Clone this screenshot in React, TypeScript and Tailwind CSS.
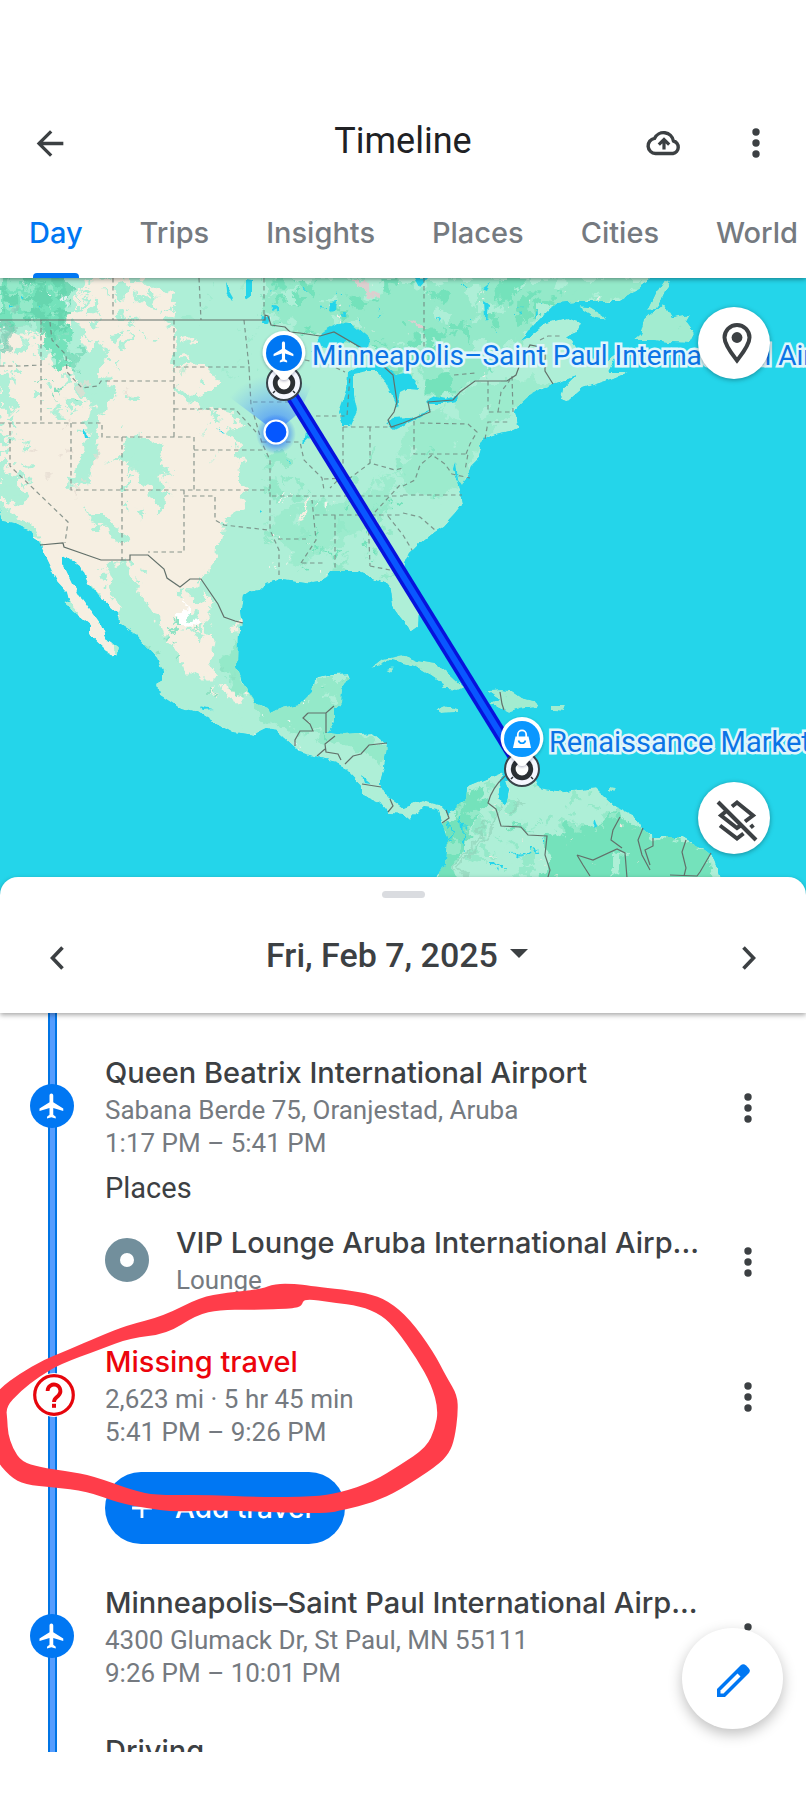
import React from "react";
import { MdArrowBack, MdAdd, MdFlight } from "react-icons/md";

type Pt = [number, number];

/* ---------- drawing helpers ---------- */

function smooth(points: Pt[]): string {
  const mid = (a: Pt, b: Pt): Pt => [(a[0] + b[0]) / 2, (a[1] + b[1]) / 2];
  const n = points.length;
  const start = mid(points[n - 1], points[0]);
  let d = `M${start[0]} ${start[1]}`;
  for (let i = 0; i < n; i++) {
    const m = mid(points[i], points[(i + 1) % n]);
    d += `Q${points[i][0]} ${points[i][1]} ${m[0]} ${m[1]}`;
  }
  return d + "Z";
}

function random(seed: number) {
  let s = seed;
  return () => {
    s = (s * 1664525 + 1013904223) % 4294967296;
    return s / 4294967296;
  };
}

type Box = [number, number, number, number];

function patches(seed: number, count: number, [x0, y0, x1, y1]: Box, min: number, max: number): string {
  const r = random(seed);
  let d = "";
  for (let i = 0; i < count; i++) {
    const cx = x0 + r() * (x1 - x0);
    const cy = y0 + r() * (y1 - y0);
    const size = min + r() * r() * (max - min);
    const squash = 0.4 + r() * 0.6;
    const tilt = r() * Math.PI;
    for (let k = 0; k < 9; k++) {
      const a = (k / 9) * Math.PI * 2;
      const q = size * (0.45 + r() * 0.75);
      const px = Math.cos(a) * q;
      const py = Math.sin(a) * q * squash;
      const x = cx + px * Math.cos(tilt) - py * Math.sin(tilt);
      const y = cy + px * Math.sin(tilt) + py * Math.cos(tilt);
      d += `${k ? "L" : "M"}${x.toFixed(1)} ${y.toFixed(1)}`;
    }
    d += "Z";
  }
  return d;
}

/* ---------- map data ---------- */

const MAINLAND =
  "M0 270H650L648 283L636 291L620 301L603 301L576 301L556 303L550 309L536 323L528 331L521 341L530 336L546 323L566 318L580 324L578 331L566 336L573 341L583 356L595 359L606 362L618 354L608 372L628 372L611 379L583 388L568 401L561 398L563 389L576 376L563 381L553 384L540 389L531 394L518 406L515 413L518 423L521 426L510 431L496 434L483 439L480 444L481 449L478 459L471 466L468 474L462 486L458 480L456 462L454 470L460 489L463 503L455 513L443 526L435 531L420 543L410 553L405 564L404 580L413 600L419 613L418 627L411 632L405 623L400 617L393 607L391 590L385 583L373 578L357 571L330 571L328 577L320 582L313 583L290 580L280 579L267 583L260 590L250 592L243 597L241 610L243 625L238 633L237 668L243 683L255 702L268 707L270 713L280 708L300 704L312 692L314 678L330 674L348 673L350 678L342 690L341 702L334 708L334 723L328 733L343 735L373 733L387 745L384 767L380 783L388 797L403 808L423 801L440 805L448 813L456 807L465 800L466 787L483 780L503 772L500 785L498 798L506 804L509 790L506 781L520 776L536 780L540 788L563 792L596 788L616 807L636 817L643 828L653 837L683 837L700 847L713 857L720 877L725 900H432L434 876L446 864L448 840L443 826L441 818L438 809L423 807L410 820L403 814L388 813L380 803L362 795L362 785L343 765L337 762L317 757L300 752L287 740L277 730L267 728L253 735L233 732L217 723L200 713L178 707L160 695L158 685L162 680L162 672L157 658L143 643L133 632L119 623L117 613L100 598L87 582L80 566L63 554L63 565L72 584L87 605L100 623L107 640L118 648L117 655L113 657L103 647L90 635L90 625L78 615L63 603L70 600L68 592L57 580L53 573L40 546L30 531L13 523L3 521L0 511Z";
const ISLANDS =
  "M372 668L383 659L403 655L418 661L437 664L450 674L464 687L458 690L444 689L440 682L425 672L415 666L403 663L390 660L376 667ZM436 709L445 705L457 709L457 712L442 713ZM487 691L500 690L512 691L522 698L534 701L537 706L520 708L508 712L500 708L490 704L500 700L494 696ZM551 706L566 706L564 711L551 710ZM578 306L590 307L603 315L606 319L595 317ZM648 310L656 293L665 279L670 281L663 298L655 309ZM644 320L655 310L664 304L672 318L690 315L686 322L694 333L689 343L668 342L653 340L633 340L640 334ZM386 670L393 668L390 672ZM609 788L615 789L613 793L609 791Z";
const DESERT =
  "M68 320L75 300L88 282L112 280L140 282L150 290L168 296L175 312L165 320L172 330L174 362L172 372L190 364L206 368L218 385L205 392L196 404L214 410L232 414L243 424L224 432L238 445L240 462L234 482L245 491L234 513L220 530L215 558L206 580L196 588L212 602L204 620L214 640L211 662L210 678L204 678L197 671L188 671L182 652L165 636L159 618L150 604L141 592L132 575L116 569L104 566L102 578L112 592L118 616L100 598L84 572L62 556L72 582L92 610L108 640L118 653L110 654L92 638L80 614L56 580L44 546L36 530L22 516L6 508L0 498V330L20 338Z";
const DESERT_SOUTH = "M213 686L219 690L220 697L215 696ZM224 688L232 685L241 695L242 703L228 696ZM233 622L243 625L237 633Z";
const GREEN_OVER_DESERT =
  "M76 322L84 330L82 350L96 340L108 350L98 372L112 378L108 400L104 420L92 430L100 450L90 470L86 484L68 486L76 466L84 446L90 400L76 392L70 340ZM124 440L146 436L160 444L166 470L160 486L170 492L162 508L152 500L144 482L128 468L118 458L110 466ZM86 510L100 514L116 528L128 530L130 542L112 538L98 528ZM0 460L10 470L22 490L26 506L10 500L0 490ZM0 372L12 380L8 392L22 400L12 410L0 404ZM104 566L116 562L130 570L138 590L120 580ZM192 586L204 588L206 606L194 598ZM176 384L196 396L206 394L200 402L186 400Z";
const CANADA =
  "M264 278H648L636 291L620 301L603 301L556 303L536 323L521 341L500 365L475 381L455 394L430 401L415 385L395 375L370 350L334 332L320 336L300 333L290 327L270 325L264 315Z";
const EAST =
  "M420 412L455 398L478 381L507 381L530 380L552 384L518 406L480 444L462 486L440 500L405 490L375 520L340 545L300 565L270 530L268 515L300 505L350 500L390 470Z";
const TROPICS =
  "M238 640L243 683L255 702L280 708L312 692L314 678L350 678L334 723L387 745L384 767L370 750L340 745L300 735L270 722L250 705L232 688L222 660Z";
const AMAZON =
  "M536 900L548 860L546 835L570 826L600 822L616 807L653 837L700 847L725 900ZM443 830L460 800L480 783L486 800L470 830L455 870L432 900ZM500 822L545 836L520 832Z";
const LAKES =
  "M310 352L324 330L336 323L352 324L370 339L368 348L360 348L347 340L334 348L320 346ZM347 372L362 366L375 369L354 374L354 395L357 410L350 427L343 427L339 412L346 392ZM364 371L374 362L386 366L396 375L408 372L420 389L408 388L400 392L397 407L392 395L384 380L376 371ZM386 424L394 418L410 417L432 409L418 418L394 430ZM427 402L432 396L446 399L457 395L456 402L446 404L430 404ZM330 302L337 301L336 311L329 312ZM225 282L234 298L232 301L226 292ZM246 279L252 280L252 295L246 299ZM263 315L270 318L268 324L262 322ZM482 289L490 283L487 291ZM415 278L428 278L420 287ZM484 302L489 305L487 322L485 318ZM82 428L89 437L84 437ZM305 432L309 438L303 443ZM217 427L225 434L222 433ZM286 460L291 464L290 465ZM361 777L370 784L363 783ZM595 818L598 826L594 828ZM199 706L213 709L204 710ZM261 510L262 513L259 512Z";
const BORDERS =
  "M0 320H265V315L268 316L271 325L285 327L290 332L300 333L320 336L334 332L365 350L393 375L397 402L394 412L388 420L391 427L403 423L430 412L428 402L453 400L460 392L475 381H507L516 375L520 364L530 345L545 348V371L553 384M40 545L63 543L64 547L101 560H130V555H148L164 569L167 578L180 587L190 579H201L218 604L224 617L235 621L243 623M308 713L303 718L310 724L313 731H300L295 740V746M308 713H326L334 706M326 713V733M335 736L325 744L326 752L338 754L341 760M325 749L317 756M345 764L353 756L361 754L369 745L387 743M362 784L381 787M390 799L393 806L388 812M446 810L449 818L442 823M505 776C495 785 490 795 488 803L496 809L501 826L521 827L528 835L547 836L545 855L550 870L546 884M500 692L502 704L504 710M577 855L593 860L617 849L625 853L627 878M577 855L583 865L590 876M620 817L613 830L611 840L622 848M643 828L638 840L642 855L650 870M653 838V846L645 850L650 865M686 840L682 852L686 868L684 876M711 853L700 872L697 876L670 875";
const STATES =
  "M41 320V423M0 366L20 366L42 365M50 322L52 340L66 355L67 372L82 388L98 386L101 381H174M0 423H102V437H194V490M174 320V437M71 423V490H270M122 437V560M194 450H263M184 490V552H148M184 496H215V520L224 525L268 530M176 367H250M174 409H235L256 432M10 423V466L68 522L65 543M244 320L249 367L251 405L262 443L270 460V530L279 550V578M253 402H300M262 442H300L304 460L322 478L324 490M272 496H403M315 515H403M343 427V475L330 488M370 427V463L395 470L403 468M343 427H395M316 416H347L350 375M335 515V570M368 515L370 566M370 566L390 570M301 563L316 540L312 500M278 539H306M302 563H325M324 479L350 478L370 463M375 512L400 485M388 516L403 535L412 550M113 278V320M199 278L201 320M264 278V315M424 278V350L440 365M454 375L475 373M414 421V454H468L465 470M420 423L468 424L477 432L470 444L466 454M488 381V412H513M485 439L488 422H510M498 412L501 392L510 380M512 376L513 412M403 495H462M403 513L420 517L435 530M403 486L415 480L420 465L432 455L445 464L452 474L470 478M540 340L548 336L560 336M305 360L330 365L345 372";

function Plane({ cx, cy, size }: { cx: number; cy: number; size: number }) {
  return (
    <path
      transform={`translate(${cx - size / 2} ${cy - size / 2}) scale(${size / 24})`}
      fill="#fff"
      d="M21 16v-2l-8-5V3.500c0-.83-.67-1.500-1.500-1.500S10 2.670 10 3.500V9l-8 5v2l8-2.500V19l-2 1.500V22l3.500-1 3.500 1v-1.500L13 19v-5.500l8 2.500z"
    />
  );
}

function StopRing({ x, y }: { x: number; y: number }) {
  return (
    <g>
      <circle cx={x} cy={y} r="17" fill="#f5f7ff" stroke="#39444b" strokeWidth="2" />
      <circle cx={x} cy={y} r="8.800" fill="#fff" stroke="#2b2f33" strokeWidth="4.800" />
      <path d={`M${x - 9} ${y + 8}l-2 2M${x + 9} ${y + 8}l2 2`} stroke="#2b2f33" strokeWidth="1.500" />
    </g>
  );
}

function PinBody({ x, y, fill, children }: { x: number; y: number; fill: string; children: React.ReactNode }) {
  return (
    <g>
      <path
        d={`M${x} ${y + 27}c-4 0-6-5-11-9.500A21.300 21.300 0 1 1 ${x + 11} ${y + 17.5}c-5 4.500-7 9.500-11 9.500z`}
        fill="#fff"
        filter="url(#pin-shadow)"
      />
      <circle cx={x} cy={y} r="18" fill={fill} />
      {children}
    </g>
  );
}

function MapDrawing() {
  return (
    <svg
      className="block h-full w-full"
      viewBox="0 278 806 618"
      preserveAspectRatio="xMinYMin slice"
      role="img"
      aria-label="Map of the day's route"
    >
      <defs>
        <clipPath id="land">
          <path d={MAINLAND} />
          <path d={ISLANDS} />
        </clipPath>
        <clipPath id="desert">
          <path d={DESERT} />
        </clipPath>
        <clipPath id="canada">
          <path d={CANADA} />
        </clipPath>
        <clipPath id="east">
          <path d={EAST} />
        </clipPath>
        <radialGradient id="beam" gradientUnits="userSpaceOnUse" cx="276" cy="432" r="58">
          <stop offset="0" stopColor="#2f7cff" stopOpacity="0.850" />
          <stop offset="1" stopColor="#5aa0ff" stopOpacity="0" />
        </radialGradient>
        <radialGradient id="halo" gradientUnits="userSpaceOnUse" cx="276" cy="434" r="20">
          <stop offset="0.500" stopColor="#1b62ff" stopOpacity="0.600" />
          <stop offset="1" stopColor="#1b62ff" stopOpacity="0" />
        </radialGradient>
        <filter id="pin-shadow" x="-30%" y="-30%" width="160%" height="170%">
          <feDropShadow dx="0" dy="1" stdDeviation="1.500" floodColor="#003" floodOpacity="0.350" />
        </filter>
        <filter
          id="terrain"
          filterUnits="userSpaceOnUse"
          x="-20"
          y="250"
          width="850"
          height="670"
          colorInterpolationFilters="sRGB"
        >
          <feTurbulence type="fractalNoise" baseFrequency="0.070" numOctaves="3" seed="4" result="noise" />
          <feDisplacementMap in="SourceGraphic" in2="noise" scale="22" xChannelSelector="R" yChannelSelector="G" />
        </filter>
        <filter
          id="shore"
          filterUnits="userSpaceOnUse"
          x="-20"
          y="250"
          width="850"
          height="670"
          colorInterpolationFilters="sRGB"
        >
          <feTurbulence type="fractalNoise" baseFrequency="0.100" numOctaves="2" seed="9" result="noise" />
          <feDisplacementMap in="SourceGraphic" in2="noise" scale="6" xChannelSelector="R" yChannelSelector="G" />
        </filter>
      </defs>

      <rect x="0" y="278" width="806" height="620" fill="#24d5ea" />
      <g filter="url(#shore)">
        <path d="M-12 270H2V511L-12 505Z" fill="#aeefd7" />
        <g clipPath="url(#land)">
          <path d={MAINLAND} fill="#aeefd7" />
          <path d={ISLANDS} fill="#a2ecd0" />
          <g filter="url(#terrain)">
            <path d={CANADA} fill="#94e9c9" />
            <path d={TROPICS} fill="#94e9c9" />
            <path d={AMAZON} fill="#74e2bb" />
            <path d="M612 855L625 850L622 875L608 870Z" fill="#aeefd7" />
            <path d={DESERT} fill="#f6efe2" stroke="#f6efe2" strokeWidth="3" />
            <path d={DESERT_SOUTH} fill="#f6efe2" />
            <path d="M0 260H60L66 320L80 345L74 362L58 372L46 350L44 322L20 326L0 345Z" fill="#74e2bb" />
            <path d={GREEN_OVER_DESERT} fill="#aeefd7" />
            <g clipPath="url(#canada)">
              <path d={patches(11, 70, [264, 278, 560, 400], 4, 18)} fill="#74e2bb" />
              <path d={patches(12, 75, [264, 278, 650, 400], 4, 16)} fill="#aeefd7" />
              <path d={patches(13, 30, [264, 278, 620, 340], 1, 4)} fill="#24d5ea" />
              <path d={patches(14, 60, [264, 278, 650, 390], 1, 2)} fill="#f1f2ea" />
              <path d="M415 318L424 322L427 328L418 325ZM352 279L366 280L372 292L382 290L380 297L368 295L358 286Z" fill="#dccfcf" />
            </g>
            <g clipPath="url(#east)">
              <path d={EAST} fill="#94e9c9" opacity="0.700" />
              <path d={patches(21, 60, [265, 390, 540, 575], 4, 18)} fill="#aeefd7" />
              <path d={patches(22, 18, [300, 440, 470, 575], 2, 7)} fill="#84e5c2" />
            </g>
            <path d={patches(23, 34, [265, 450, 400, 580], 4, 16)} fill="#94e9c9" />
            <path d={patches(24, 16, [290, 500, 400, 570], 2, 6)} fill="#74e2bb" />
            <path d={patches(25, 22, [265, 495, 345, 575], 1, 3)} fill="#f3f6ec" />
            <path d="M303 500L307 496L306 512L302 522L300 515L304 510Z" fill="#f6efe2" />
            <g clipPath="url(#desert)">
              <path d={patches(31, 50, [60, 278, 178, 345], 2, 10)} fill="#aeefd7" />
              <path d={patches(32, 50, [0, 330, 90, 440], 2, 10)} fill="#aeefd7" />
              <path d={patches(33, 26, [80, 350, 135, 480], 2, 8)} fill="#aeefd7" />
              <path d={patches(34, 22, [120, 440, 175, 520], 2, 9)} fill="#aeefd7" />
              <path d={patches(35, 22, [0, 440, 30, 540], 2, 8)} fill="#aeefd7" />
              <path d={patches(36, 20, [190, 380, 246, 460], 2, 9)} fill="#aeefd7" />
              <path d={patches(37, 20, [100, 560, 150, 620], 2, 8)} fill="#aeefd7" />
              <path d={patches(38, 16, [180, 580, 214, 640], 2, 7)} fill="#aeefd7" />
              <path d={patches(39, 14, [20, 380, 130, 500], 2, 8)} fill="#e6dcd2" opacity="0.700" />
            </g>
            <path d={patches(41, 60, [0, 278, 66, 330], 2, 13)} fill="#63d3ad" opacity="0.800" />
            <path d={patches(42, 34, [8, 278, 70, 330], 2, 9)} fill="#94e9c9" />
            <path d={patches(47, 20, [44, 330, 80, 400], 2, 9)} fill="#86dfc0" />
            <path d={patches(43, 8, [20, 280, 66, 305], 1, 5)} fill="#e6f3f0" />
            <path d={patches(44, 5, [10, 285, 60, 330], 1, 4)} fill="#24d5ea" />
            <path d={patches(45, 12, [0, 310, 20, 345], 3, 10)} fill="#8fcdb9" opacity="0.700" />
            <path d={patches(46, 20, [178, 282, 260, 380], 1, 6)} fill="#94e9c9" opacity="0.500" />
            <path d="M182 336L188 334L184 342ZM186 338L195 336L194 341L188 342ZM180 356L188 354L186 361ZM132 280L142 284L150 300L140 296Z" fill="#f6efe2" />
            <path d="M183 597L185 606L189 614L196 616L200 625L192 628L188 632L185 624L177 620L182 612Z" fill="#fff" />
            <path d="M186 612L196 608L200 618L192 620ZM177 632L188 632L198 630L206 638L195 634Z" fill="#aeefd7" />
            <path d={patches(51, 22, [130, 610, 240, 735], 2, 6)} fill="#8fe3c4" />
            <path d={patches(52, 24, [240, 690, 340, 750], 2, 7)} fill="#aeefd7" />
            <path d={patches(53, 14, [260, 680, 400, 800], 2, 6)} fill="#74e2bb" />
            <path d={patches(54, 26, [240, 680, 400, 815], 1, 2)} fill="#f4fbf6" />
            <path d={patches(61, 30, [450, 780, 545, 880], 3, 14)} fill="#94e9c9" />
            <path d={patches(62, 22, [540, 785, 625, 830], 3, 12)} fill="#94e9c9" />
            <path d={patches(63, 18, [480, 800, 545, 880], 3, 10)} fill="#aeefd7" />
            <path d={patches(64, 22, [465, 785, 640, 880], 1, 2)} fill="#f2eadf" />
            <path d="M500 806L492 830L474 852L460 876M486 822L470 850L456 870M522 800L510 812" stroke="#8fd0b8" strokeWidth="3" fill="none" opacity="0.600" />
            <path d={patches(65, 22, [380, 655, 540, 715], 1, 5)} fill="#94e9c9" />
            <path d={patches(66, 20, [560, 278, 695, 345], 2, 9)} fill="#94e9c9" />
            <path d="M486 864L500 869L510 869M515 855L538 850M449 822L452 840M462 815L464 850M546 836L543 846" stroke="#24d5ea" strokeWidth="1.500" fill="none" />
          </g>
        </g>
        <path d={LAKES} fill="#24d5ea" />
      </g>
      <path d={STATES} fill="none" stroke="#6f7f79" strokeWidth="1.200" strokeDasharray="4.500 3.500" opacity="0.800" />
      <path d={BORDERS} fill="none" stroke="#62706a" strokeWidth="1.200" />

      <path d="M276 432L228 396L250 374L312 384L300 412Z" fill="url(#beam)" />
      <circle cx="276" cy="434" r="20" fill="url(#halo)" />
      <circle cx="276" cy="432" r="11.500" fill="#0557ff" stroke="#fff" strokeWidth="2.200" />

      <path d="M284 383L522 769" stroke="#0712dc" strokeWidth="13" />
      <path d="M284 383L522 769" stroke="#0957ff" strokeWidth="6" />

      <StopRing x={284} y={383} />
      <PinBody x={284} y={353} fill="#0077f3">
        <Plane cx={284} cy={352} size={25} />
      </PinBody>
      <StopRing x={522} y={769} />
      <PinBody x={522} y={739} fill="#0a97ff">
        <path d="M517.800 737V734.500a4.200 4.200 0 0 1 8.400 0V737" fill="#0a97ff" stroke="#fff" strokeWidth="1.800" />
        <path d="M515.500 736.500H528.500L531 748H513Z" fill="#fff" />
        <path d="M518.500 740.500a3.600 3.600 0 0 0 7 0" fill="none" stroke="#0a97ff" strokeWidth="1.600" />
      </PinBody>
    </svg>
  );
}

function MapLabel({ place, children }: { place: string; children: string }) {
  return (
    <span
      className={`absolute leading-8 whitespace-nowrap text-[#0b74e6] [-webkit-text-stroke:5px_#dff6fb] [paint-order:stroke_fill] ${place}`}
    >
      {children}
    </span>
  );
}

function Kebab({ label }: { label: string }) {
  return (
    <button type="button" aria-label={label} className="flex h-12 w-12 items-center justify-center text-[#3c4043]">
      <svg width="8" height="30" viewBox="0 0 8 30" fill="currentColor">
        <circle cx="4" cy="4" r="3.700" />
        <circle cx="4" cy="15" r="3.700" />
        <circle cx="4" cy="26" r="3.700" />
      </svg>
    </button>
  );
}

const TABS = ["Day", "Trips", "Insights", "Places", "Cities", "World"];

function Header() {
  return (
    <header className="relative z-10 bg-white pt-[100px] shadow-[0_1px_5px_rgba(0,0,0,0.45)]">
      <div className="grid grid-cols-[1fr_auto_1fr] items-center">
        <button type="button" aria-label="Back" className="ml-[30px] flex h-[86px] w-10 items-center justify-center text-[#3c4043]">
          <MdArrowBack size={43} />
        </button>
        <h1 className="pb-1 text-[36px] leading-[44px] text-[#202124]">Timeline</h1>
        <div className="flex items-center justify-end gap-12 pr-[26px] text-[#3c4043]">
          <button type="button" aria-label="Backup" className="flex h-12 w-10 items-center justify-center">
            <svg width="38" height="38" viewBox="0 0 38 38" fill="none" stroke="currentColor">
              <path
                d="M10.500 29.500a7.600 7.600 0 0 1-1-15.100A10 10 0 0 1 28.400 17a6.400 6.400 0 0 1-.4 12.500z"
                strokeWidth="3.400"
                strokeLinejoin="round"
              />
              <path d="M19 25.500V17M13.800 20.700 19 15.500l5.200 5.200" strokeWidth="3.200" />
            </svg>
          </button>
          <Kebab label="More options" />
        </div>
      </div>
      <nav className="flex justify-between overflow-hidden pr-[8px] pl-[29px]">
        {TABS.map((tab, i) => (
          <button
            key={tab}
            type="button"
            className={`flex flex-col items-center pt-[29px] font-['Inter',sans-serif] text-[29px] leading-9 font-medium ${i === 0 ? "text-[#0077f3]" : "text-[#757a80]"}`}
          >
            {tab}
            <span className={`mt-[22px] h-[5px] w-[46px] rounded-t ${i === 0 ? "bg-[#0077f3]" : ""}`} />
          </button>
        ))}
      </nav>
    </header>
  );
}

function MapArea() {
  const round =
    "absolute right-9 flex h-[72px] w-[72px] items-center justify-center rounded-full bg-white pl-[6px] text-[#3c4043] shadow-[0_1px_5px_rgba(0,0,0,0.35)]";
  return (
    <section className="relative h-[618px] overflow-hidden bg-[#24d5ea]">
      <MapDrawing />
      <MapLabel place="left-[312px] top-[62px] text-[28px]">Minneapolis–Saint Paul International Airport</MapLabel>
      <MapLabel place="left-[549px] top-[448px] text-[29px]">Renaissance Market</MapLabel>
      <button type="button" aria-label="Show places" className={`${round} top-[29px]`}>
        <svg width="32" height="42" viewBox="0 0 32 42" fill="none">
          <path d="M16 38.500C11 32 3.500 23 3.500 15.500a12.500 12.500 0 0 1 25 0C28.500 23 21 32 16 38.500z" stroke="currentColor" strokeWidth="4" />
          <circle cx="16" cy="15.500" r="5.400" fill="currentColor" />
        </svg>
      </button>
      <button type="button" aria-label="Hide layers" className={`${round} top-[504px]`}>
        <svg width="44" height="44" viewBox="0 0 44 44" className="mt-1" fill="none" stroke="currentColor" strokeWidth="4">
          <path d="M3 4 41 42" />
          <path d="M17 8.500 22 4.500 38 17.500 30 23.500" />
          <path d="M12 12.500 6 17.500 22 30 25.500 27.500" />
          <path d="M5 27.500 22 40.500 28.500 35.500" />
          <path d="M35.500 29.500 38.500 27" />
        </svg>
      </button>
    </section>
  );
}

function SheetHeader() {
  return (
    <div className="relative z-10 rounded-t-[18px] bg-white pt-[14px] pb-[27px] shadow-[0_2px_5px_rgba(0,0,0,0.35)]">
      <div className="mx-auto h-[7px] w-[43px] rounded-full bg-[#dadce0]" />
      <div className="mt-[31px] grid grid-cols-[1fr_auto_1fr] items-center text-[#3c4043]">
        <button type="button" aria-label="Previous day" className="ml-[33px] flex h-[57px] w-[48px] items-center justify-center">
          <svg width="16" height="26" viewBox="0 0 16 26" fill="none" stroke="currentColor" strokeWidth="3.600">
            <path d="M13.500 2.500 3.500 13l10 10.500" />
          </svg>
        </button>
        <button type="button" className="flex items-center gap-3 pr-3 pb-[5px] text-[34px] leading-10 font-medium">
          Fri, Feb 7, 2025
          <svg width="18" height="9" viewBox="0 0 18 9" className="-mt-1" fill="currentColor">
            <path d="M0 0H18L9 9Z" />
          </svg>
        </button>
        <button type="button" aria-label="Next day" className="mr-[33px] flex h-[57px] w-[48px] items-center justify-center justify-self-end">
          <svg width="16" height="26" viewBox="0 0 16 26" fill="none" stroke="currentColor" strokeWidth="3.600">
            <path d="M2.500 2.500 12.500 13l-10 10.500" />
          </svg>
        </button>
      </div>
    </div>
  );
}

function FlightNode() {
  return (
    <span className="flex h-11 w-11 items-center justify-center rounded-full bg-[#0077f3] text-white">
      <MdFlight size={30} />
    </span>
  );
}

function MissingNode() {
  return (
    <svg width="44" height="44" viewBox="0 0 44 44" className="ml-[2px]">
      <circle cx="22" cy="22" r="22" fill="#fff" />
      <circle cx="22" cy="22" r="19.300" fill="#fff" stroke="#e6050c" strokeWidth="3.200" />
      <path d="M15.600 18a6.400 6.400 0 1 1 10.800 4.600C24 24.900 22 25.600 22 29" fill="none" stroke="#e6050c" strokeWidth="3.800" />
      <path d="M20 30.800h4v4h-4z" fill="#e6050c" />
    </svg>
  );
}

interface EntryProps {
  node: React.ReactNode;
  title: string;
  lines: string[];
  tone?: string;
  nested?: boolean;
}

function Entry({ node, title, lines, tone = "text-[#3c4043]", nested = false }: EntryProps) {
  return (
    <div className={`flex items-center ${nested ? "pl-[105px]" : "pl-[30px]"}`}>
      <div className={`shrink-0 ${nested ? "w-[71px]" : "w-[75px]"}`}>{node}</div>
      <div className="min-w-0 flex-1 whitespace-nowrap">
        <h2 className={`font-['Inter',sans-serif] text-[29px] leading-[42px] font-medium ${tone}`}>{title}</h2>
        {lines.map((line) => (
          <p key={line} className="text-[26px] leading-[33px] text-[#757a80]">
            {line}
          </p>
        ))}
      </div>
      <div className="mr-[34px] pt-1">
        <Kebab label={`Options for ${title}`} />
      </div>
    </div>
  );
}

const LOOP_OUTER: Pt[] = [
  [-60, 690], [0, 625], [60, 580], [130, 540], [200, 512], [300, 468], [380, 436], [490, 408], [600, 352], [680, 338], [780, 328], [825, 311], [885, 311],
  [930, 318], [1000, 326], [1100, 338], [1165, 362], [1230, 418], [1300, 515], [1340, 592], [1372, 645], [1374, 700], [1364, 775], [1348, 820],
  [1310, 858], [1200, 930], [1120, 968], [1030, 990], [980, 1000], [860, 998], [640, 990], [520, 996], [440, 984], [360, 970], [260, 933], [160, 922],
  [75, 914], [30, 890], [-20, 830],
];
const LOOP_INNER: Pt[] = [
  [22, 720], [18, 680], [60, 635], [120, 588], [180, 553], [300, 508], [390, 474], [500, 462], [590, 405], [660, 389], [760, 390], [880, 386], [905, 378],
  [912, 355], [1000, 368], [1080, 378], [1145, 405], [1190, 450], [1250, 535], [1295, 615], [1315, 690], [1305, 745], [1280, 802], [1200, 855], [1120, 905],
  [1020, 938], [940, 950], [780, 952], [620, 944], [470, 946], [400, 932], [280, 888], [200, 873], [120, 862], [65, 845], [38, 805], [24, 760],
];

function MarkerLoop() {
  return (
    <svg
      className="pointer-events-none absolute top-[167px] left-0 h-[380px] w-[470px]"
      viewBox="0 0 1410 1140"
      aria-hidden="true"
    >
      <path d={smooth(LOOP_OUTER) + smooth(LOOP_INNER)} fill="#ff3d4a" fillRule="evenodd" />
    </svg>
  );
}

function TimelineList() {
  return (
    <main className="relative h-[739px] overflow-hidden bg-white pt-[39px]">
      <div className="absolute inset-y-0 left-12 w-[9px] border-x-2 border-[#0074e4] bg-[#559dff]" />
      <div className="relative">
        <Entry
          node={<FlightNode />}
          title="Queen Beatrix International Airport"
          lines={["Sabana Berde 75, Oranjestad, Aruba", "1:17 PM – 5:41 PM"]}
        />
        <h3 className="mt-[6px] pl-[105px] text-[29px] leading-[44px] text-[#3c4043]">Places</h3>
        <div className="mt-3">
          <Entry
            nested
            node={<span className="block h-11 w-11 rounded-full border-[15px] border-[#728f9c] bg-white" />}
            title="VIP Lounge Aruba International Airp..."
            lines={["Lounge"]}
          />
        </div>
        <div className="mt-11">
          <Entry
            node={<MissingNode />}
            title="Missing travel"
            tone="text-[#ec040c]"
            lines={["2,623 mi · 5 hr 45 min", "5:41 PM – 9:26 PM"]}
          />
        </div>
        <button
          type="button"
          className="mt-[23px] ml-[105px] flex h-[72px] w-60 items-center gap-4 rounded-full bg-[#0077f3] pl-5 font-['Inter',sans-serif] text-[28px] font-medium whitespace-nowrap text-white"
        >
          <MdAdd size={34} />
          Add travel
        </button>
        <div className="mt-[38px]">
          <Entry
            node={<FlightNode />}
            title="Minneapolis–Saint Paul International Airp..."
            lines={["4300 Glumack Dr, St Paul, MN 55111", "9:26 PM – 10:01 PM"]}
          />
        </div>
        <h2 className="mt-10 pl-[105px] font-['Inter',sans-serif] text-[29px] leading-[42px] font-medium text-[#3c4043]">Driving</h2>
      </div>
      <MarkerLoop />
      <button
        type="button"
        aria-label="Edit day"
        className="absolute right-[23px] bottom-[23px] flex h-[101px] w-[101px] items-center justify-center rounded-full bg-white text-[#0077f3] shadow-[0_5px_14px_rgba(0,0,0,0.25)]"
      >
        <svg width="34" height="34" viewBox="0 0 34 34" className="mt-1">
          <path
            d="M1 25 24.500 1.500a4 4 0 0 1 5.600 0l2.400 2.400a4 4 0 0 1 0 5.600L9 33H1Z"
            fill="currentColor"
          />
          <path d="M4.500 26.500 21.500 9.500l3 3-17 17h-3Z" fill="#fff" />
        </svg>
      </button>
    </main>
  );
}

export default function App() {
  return (
    <div className="min-h-screen overflow-x-hidden bg-white font-['Roboto',sans-serif]">
      <Header />
      <MapArea />
      <div className="relative -mt-[19px]">
        <SheetHeader />
        <TimelineList />
      </div>
    </div>
  );
}
